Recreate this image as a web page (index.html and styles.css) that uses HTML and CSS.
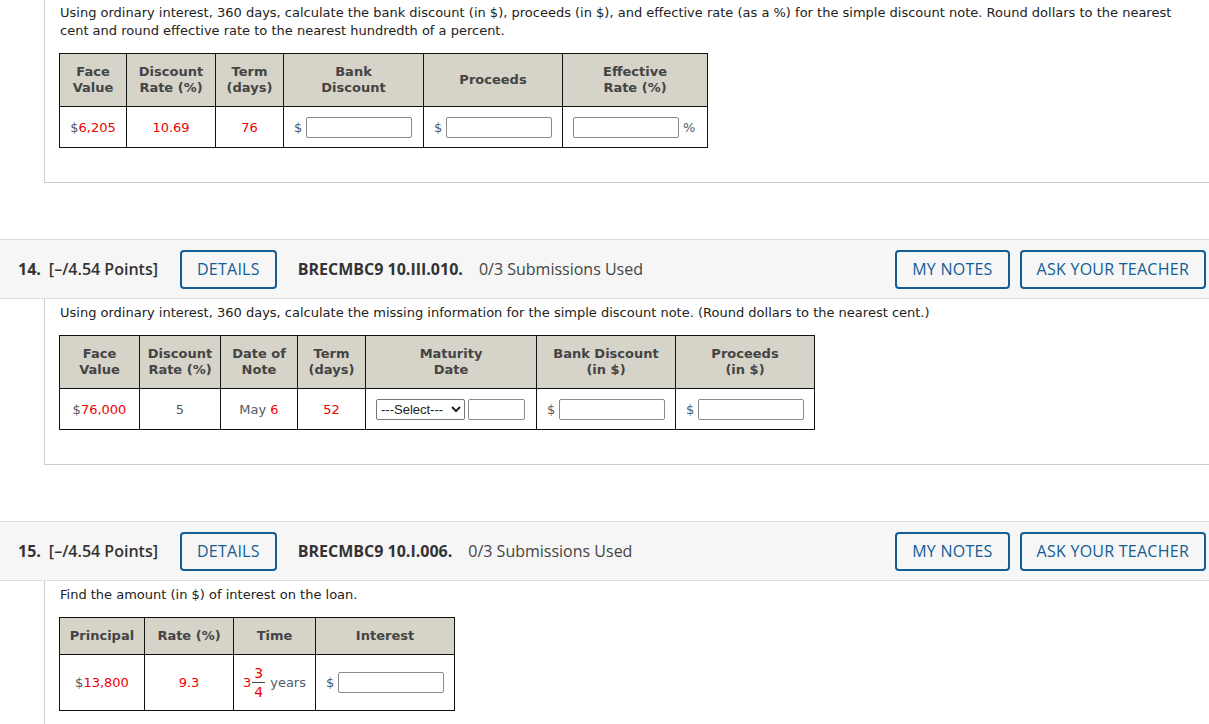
FILE: index.html
```html
<!DOCTYPE html>
<html>
<head>
<meta charset="utf-8">
<link rel="stylesheet" href="styles.css">
</head>
<body>
<div class="page">
  <div class="qbody first">
    <p class="prompt">Using ordinary interest, 360 days, calculate the bank discount (in $), proceeds (in $), and effective rate (as a %) for the simple discount note. Round dollars to the nearest cent and round effective rate to the nearest hundredth of a percent.</p>
    <table class="grid t1">
      <colgroup><col class="c67"><col class="c89"><col class="c68"><col class="c140"><col class="c139"><col class="c145"></colgroup>
      <tr class="hrow"><th>Face<br>Value</th><th>Discount<br>Rate (%)</th><th>Term<br>(days)</th><th>Bank<br>Discount</th><th>Proceeds</th><th>Effective<br>Rate (%)</th></tr>
      <tr class="drow">
        <td class="ctr"><span class="g">$</span><span class="r">6,205</span></td>
        <td class="ctr"><span class="r">10.69</span></td>
        <td class="ctr"><span class="r">76</span></td>
        <td class="inp"><span class="g">$</span><input type="text" class="box"></td>
        <td class="inp"><span class="g">$</span><input type="text" class="box"></td>
        <td class="inp"><input type="text" class="box"><span class="g">%</span></td>
      </tr>
    </table>
  </div>

  <div class="qhead">
    <span class="qnum">14.</span>
    <span class="qpts">[–/4.54 Points]</span>
    <button class="btn">DETAILS</button>
    <span class="qid">BRECMBC9 10.III.010.</span>
    <span class="qsub">0/3 Submissions Used</span>
    <span class="spacer"></span>
    <button class="btn">MY NOTES</button>
    <button class="btn">ASK YOUR TEACHER</button>
  </div>
  <div class="qbody">
    <p class="prompt">Using ordinary interest, 360 days, calculate the missing information for the simple discount note. (Round dollars to the nearest cent.)</p>
    <table class="grid t2">
      <colgroup><col class="c80"><col class="c81"><col class="c77"><col class="c68"><col class="c171"><col class="c139"><col class="c139"></colgroup>
      <tr class="hrow"><th>Face<br>Value</th><th>Discount<br>Rate (%)</th><th>Date of<br>Note</th><th>Term<br>(days)</th><th>Maturity<br>Date</th><th>Bank Discount<br>(in $)</th><th>Proceeds<br>(in $)</th></tr>
      <tr class="drow">
        <td class="ctr"><span class="g">$</span><span class="r">76,000</span></td>
        <td class="ctr"><span class="g">5</span></td>
        <td class="ctr"><span class="g">May </span><span class="r">6</span></td>
        <td class="ctr"><span class="r">52</span></td>
        <td class="inp sel"><select class="pick"><option>---Select---</option></select><input type="text" class="box small"></td>
        <td class="inp"><span class="g">$</span><input type="text" class="box"></td>
        <td class="inp"><span class="g">$</span><input type="text" class="box"></td>
      </tr>
    </table>
  </div>

  <div class="qhead">
    <span class="qnum">15.</span>
    <span class="qpts">[–/4.54 Points]</span>
    <button class="btn">DETAILS</button>
    <span class="qid">BRECMBC9 10.I.006.</span>
    <span class="qsub">0/3 Submissions Used</span>
    <span class="spacer"></span>
    <button class="btn">MY NOTES</button>
    <button class="btn">ASK YOUR TEACHER</button>
  </div>
  <div class="qbody">
    <p class="prompt">Find the amount (in $) of interest on the loan.</p>
    <table class="grid t3">
      <colgroup><col class="c85"><col class="c89"><col class="c82"><col class="c139"></colgroup>
      <tr class="hrow single"><th>Principal</th><th>Rate (%)</th><th>Time</th><th>Interest</th></tr>
      <tr class="drow tall">
        <td class="ctr"><span class="g">$</span><span class="r">13,800</span></td>
        <td class="ctr"><span class="r">9.3</span></td>
        <td class="ctr"><span class="mixed"><span class="r">3</span><span class="frac"><span class="num r">3</span><span class="den r">4</span></span><span class="g">years</span></span></td>
        <td class="inp"><span class="g">$</span><input type="text" class="box"></td>
      </tr>
    </table>
  </div>
</div>
</body>
</html>
```

FILE: styles.css
```css
html, body {
  margin: 0;
  padding: 0;
  background: #ffffff;
}
.page {
  width: 1209px;
  font-family: "DejaVu Sans", Verdana, sans-serif;
  font-size: 13px;
  color: #222;
}
.qbody {
  margin-left: 44px;
  border-left: 1px solid #cccccc;
  border-bottom: 1px solid #cccccc;
  padding: 5px 12px 34px 15px;
}
.qbody.first {
  padding-top: 4px;
}
.prompt {
  margin: 0 0 13px 0;
  line-height: 18px;
}
.qhead {
  margin-top: 56px;
  height: 58px;
  background: #f6f6f6;
  border-top: 1px solid #dddddd;
  border-bottom: 1px solid #dddddd;
  display: flex;
  align-items: center;
  padding-left: 18px;
  padding-right: 3px;
  font-family: "Open Sans", sans-serif;
  font-size: 16px;
  color: #333;
}
.qnum {
  font-weight: 700;
  margin-right: 8px;
}
.qpts {
  font-weight: 600;
  margin-right: 22px;
}
.qid {
  font-weight: 700;
  margin-left: 21px;
  margin-right: 16px;
}
.qsub {
  color: #444;
}
.spacer {
  flex: 1;
}
.btn {
  font-family: "Open Sans", sans-serif;
  font-size: 16px;
  letter-spacing: 0.25px;
  color: #135c94;
  background: transparent;
  border: 2px solid #135c94;
  border-radius: 4px;
  height: 39px;
  padding: 0 15px;
  margin-left: 10px;
}
.qpts + .btn {
  margin-left: 0;
}
.grid {
  border-collapse: collapse;
  table-layout: fixed;
  margin-left: -1px;
}
.t1 { width: 648px; }
.t2 { width: 755px; }
.t3 { width: 395px; }
.c67 { width: 67px; }
.c68 { width: 68px; }
.c77 { width: 77px; }
.c80 { width: 80px; }
.c81 { width: 81px; }
.c82 { width: 82px; }
.c85 { width: 85px; }
.c89 { width: 89px; }
.c139 { width: 139px; }
.c140 { width: 140px; }
.c145 { width: 145px; }
.c171 { width: 171px; }
.grid th, .grid td {
  border: 1px solid #111;
  padding: 0;
}
.grid th {
  background: #d6d3c9;
  color: #444;
  font-weight: 700;
  line-height: 16px;
  height: 52px;
  text-align: center;
}
.hrow.single th {
  height: 36px;
}
.grid td {
  height: 40px;
  color: #444;
}
.drow.tall td {
  height: 55px;
}
.ctr {
  text-align: center;
}
.r {
  color: #ee0000;
}
.g {
  color: #4f5b66;
}
.inp {
  padding: 0 0 0 10px !important;
  white-space: nowrap;
}
.inp .g {
  vertical-align: middle;
}
.box {
  width: 106px;
  height: 21px;
  box-sizing: border-box;
  border: 1px solid #8a8a8a;
  border-radius: 2px;
  padding: 0 3px;
  margin: 0 0 0 4px;
  vertical-align: middle;
  font-family: "DejaVu Sans", sans-serif;
  font-size: 13px;
}
.inp .box + .g {
  margin-left: 4px;
}
td.inp:last-child .box:first-child {
  margin-left: 0;
}
.pick {
  width: 89px;
  height: 21px;
  box-sizing: border-box;
  border: 1px solid #767676;
  border-radius: 2px;
  font-family: "Liberation Sans", Arial, sans-serif;
  font-size: 13px;
  color: #222;
  background: #fff;
  vertical-align: middle;
  padding: 0;
}
.box.small {
  width: 57px;
  margin-left: 3px;
}
.mixed {
  display: inline-flex;
  align-items: center;
}
.frac {
  display: inline-flex;
  flex-direction: column;
  align-items: center;
  margin: 0 5px 0 1px;
  line-height: 16px;
  font-size: 14px;
}
.frac .num {
  border-bottom: 1px solid #444;
  padding: 0 2px 1px 2px;
}
.frac .den {
  padding-top: 1px;
}
```
